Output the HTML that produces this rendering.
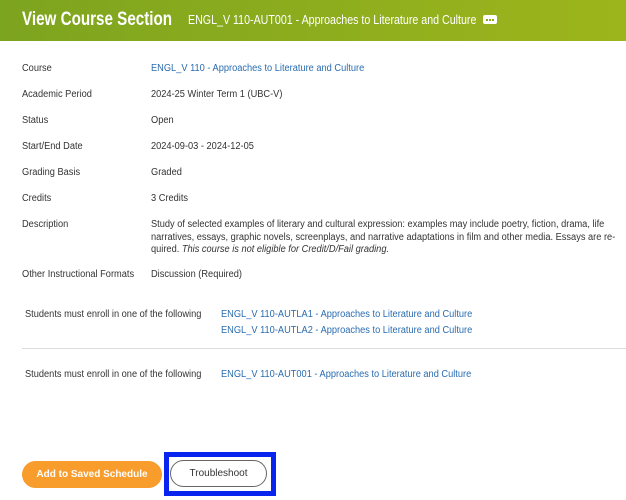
<!DOCTYPE html>
<html><head><style>
body{margin:0;width:626px;height:500px;background:#fff;font-family:"Liberation Sans",sans-serif;position:relative;overflow:hidden;color:#333}
.hdr{position:absolute;left:0;top:0;width:626px;height:41px;background:linear-gradient(90deg,#7da41f,#9db51c)}
.t1{position:absolute;left:22px;top:9px;font-size:19px;font-weight:bold;color:#fff;transform:scaleX(0.80);transform-origin:left;white-space:nowrap}
.t2{position:absolute;left:188px;top:12px;font-size:13px;color:#fff;transform:scaleX(0.82);transform-origin:left;white-space:nowrap}
.dots{position:absolute;left:483px;top:15px;width:14px;height:9px;background:#fff;border-radius:2px}
.dots i{position:absolute;top:3.5px;width:2px;height:2px;background:#8aac1e}
.r{position:absolute;font-size:10px;transform:scaleX(0.925);transform-origin:left;white-space:nowrap}
.l{left:22px}.v{left:151px}
a{color:#2a6cb0;text-decoration:none}
.hr{position:absolute;left:22px;top:348px;width:604px;height:1px;background:#ddd}
.b1{position:absolute;left:22px;top:461px;width:140px;height:27px;border-radius:14px;background:#f89c2b;color:#fff;font-size:10px;font-weight:bold;text-align:center;line-height:27px}
.box{position:absolute;left:164px;top:452px;width:102px;height:34px;border:5px solid #0a24f0}
.b2{position:absolute;left:170px;top:460px;width:97px;height:27px;border:1px solid #666;border-radius:14px;box-sizing:border-box;font-size:10px;text-align:center;line-height:25px;color:#333;background:#fff}
</style></head><body>
<div class="hdr"><div class="t1">View Course Section</div><div class="t2">ENGL_V 110-AUT001 - Approaches to Literature and Culture</div><div class="dots"><i style="left:3px"></i><i style="left:6px"></i><i style="left:9px"></i></div></div>
<div class="r l" style="top:63px">Course</div><div class="r v" style="top:63px"><a>ENGL_V 110 - Approaches to Literature and Culture</a></div>
<div class="r l" style="top:89px">Academic Period</div><div class="r v" style="top:89px">2024-25 Winter Term 1 (UBC-V)</div>
<div class="r l" style="top:115px">Status</div><div class="r v" style="top:115px">Open</div>
<div class="r l" style="top:141px">Start/End Date</div><div class="r v" style="top:141px">2024-09-03 - 2024-12-05</div>
<div class="r l" style="top:167px">Grading Basis</div><div class="r v" style="top:167px">Graded</div>
<div class="r l" style="top:193px">Credits</div><div class="r v" style="top:193px">3 Credits</div>
<div class="r l" style="top:219px">Description</div><div class="r v" style="top:219px;line-height:12.5px">Study of selected examples of literary and cultural expression: examples may include poetry, fiction, drama, life<br>narratives, essays, graphic novels, screenplays, and narrative adaptations in film and other media. Essays are re-<br>quired. <i>This course is not eligible for Credit/D/Fail grading.</i></div>
<div class="r l" style="top:269px">Other Instructional Formats</div><div class="r v" style="top:269px">Discussion (Required)</div>
<div class="r" style="left:25px;top:309px">Students must enroll in one of the following</div>
<div class="r" style="left:221px;top:309px"><a>ENGL_V 110-AUTLA1 - Approaches to Literature and Culture</a></div>
<div class="r" style="left:221px;top:325px"><a>ENGL_V 110-AUTLA2 - Approaches to Literature and Culture</a></div>
<div class="hr"></div>
<div class="r" style="left:25px;top:369px">Students must enroll in one of the following</div>
<div class="r" style="left:221px;top:369px"><a>ENGL_V 110-AUT001 - Approaches to Literature and Culture</a></div>
<div class="b1">Add to Saved Schedule</div>
<div class="box"></div>
<div class="b2">Troubleshoot</div>
</body></html>
